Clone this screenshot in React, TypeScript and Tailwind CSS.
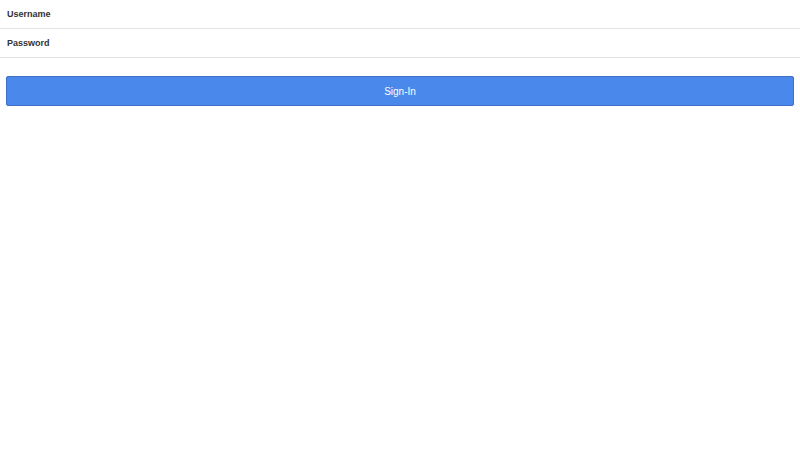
export default function App() {
  return (
    <div className="min-h-[450px] w-full bg-white font-['Liberation_Sans',Arial,sans-serif]">
      <div className="flex h-[29px] items-center border-b border-[#e3e3e3] pl-[7px] pt-[2px] text-[9px] font-bold text-[#333]">
        Username
      </div>
      <div className="flex h-[29px] items-center border-b border-[#e3e3e3] pl-[7px] pt-[1px] text-[9px] font-bold text-[#333]">
        Password
      </div>
      <div className="pl-[6px] pr-[6px] pt-[18px]">
        <button className="flex h-[30px] w-full items-center justify-center rounded-[2px] border border-[#3f6fc4] bg-[#4a88ec] text-[10px] text-white">
          Sign-In
        </button>
      </div>
    </div>
  );
}
